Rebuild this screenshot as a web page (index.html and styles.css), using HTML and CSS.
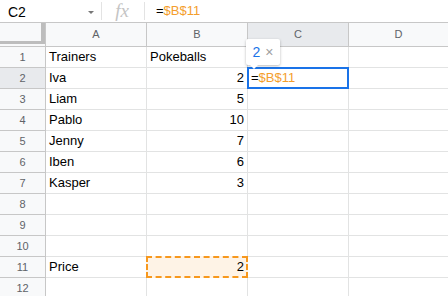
FILE: index.html
```html
<!DOCTYPE html>
<html>
<head>
<meta charset="utf-8">
<link rel="stylesheet" href="styles.css">
</head>
<body>
<div class="fbar">
  <div class="namebox"><span class="name">C2</span><span class="caret"></span></div>
  <div class="fx">fx</div>
  <div class="ftext">=<span class="ref">$B$11</span></div>
</div>
<div class="sheet">
  <div class="h corner"></div>
  <div class="h">A</div>
  <div class="h">B</div>
  <div class="h sel">C</div>
  <div class="h">D</div>

  <div class="rh">1</div><div class="c">Trainers</div><div class="c">Pokeballs</div><div class="c"></div><div class="c"></div>
  <div class="rh sel">2</div><div class="c">Iva</div><div class="c n">2</div><div class="c active">=<span class="ref">$B$11</span><div class="tip"><span class="tv">2</span><span class="tx">×</span></div></div><div class="c"></div>
  <div class="rh">3</div><div class="c">Liam</div><div class="c n">5</div><div class="c"></div><div class="c"></div>
  <div class="rh">4</div><div class="c">Pablo</div><div class="c n">10</div><div class="c"></div><div class="c"></div>
  <div class="rh">5</div><div class="c">Jenny</div><div class="c n">7</div><div class="c"></div><div class="c"></div>
  <div class="rh">6</div><div class="c">Iben</div><div class="c n">6</div><div class="c"></div><div class="c"></div>
  <div class="rh">7</div><div class="c">Kasper</div><div class="c n">3</div><div class="c"></div><div class="c"></div>
  <div class="rh">8</div><div class="c"></div><div class="c"></div><div class="c"></div><div class="c"></div>
  <div class="rh">9</div><div class="c"></div><div class="c"></div><div class="c"></div><div class="c"></div>
  <div class="rh">10</div><div class="c"></div><div class="c"></div><div class="c"></div><div class="c"></div>
  <div class="rh">11</div><div class="c">Price</div><div class="c n refcell"><span class="val">2</span></div><div class="c"></div><div class="c"></div>
  <div class="rh">12</div><div class="c"></div><div class="c"></div><div class="c"></div><div class="c"></div>
</div>
</body>
</html>
```
FILE: styles.css
```css
html, body {
  margin: 0;
  padding: 0;
  background: #fff;
  overflow: hidden;
}
body {
  width: 448px;
  height: 296px;
  font-family: "Liberation Sans", Arial, sans-serif;
  font-size: 13px;
  color: #000;
}
.fbar {
  display: flex;
  height: 22px;
  border-bottom: 1px solid #c7c7c7;
  box-sizing: content-box;
}
.namebox {
  width: 102px;
  display: flex;
  align-items: center;
  justify-content: space-between;
  padding: 0 7px 0 8px;
  box-sizing: border-box;
  border-right: 1px solid #e3e3e3;
  margin: 2px 0;
}
.name {
  font-size: 14px;
  color: #000;
  padding-top: 1px;
}
.caret {
  width: 0;
  height: 0;
  border-left: 3.5px solid transparent;
  border-right: 3.5px solid transparent;
  border-top: 3.5px solid #777;
  margin-top: 2px;
}
.fx {
  width: 43px;
  box-sizing: border-box;
  border-right: 1px solid #e3e3e3;
  margin: 2px 0;
  text-align: center;
  font-family: "Liberation Serif", "Times New Roman", serif;
  font-style: italic;
  font-size: 19px;
  line-height: 18px;
  color: #c4c4c4;
  padding-right: 2px;
}
.ftext {
  padding-left: 11px;
  line-height: 22px;
  font-size: 13px;
}
.ref {
  color: #f49e2c;
}
.sheet {
  display: grid;
  grid-template-columns: 46px 101px 101px 101px 100px;
  grid-template-rows: 24px;
  grid-auto-rows: 21px;
}
.h {
  background: #f8f9fa;
  border-right: 1px solid #c7c7c7;
  border-bottom: 1px solid #c7c7c7;
  box-sizing: border-box;
  text-align: center;
  font-size: 11px;
  line-height: 23px;
  color: #5f6368;
}
.h.sel, .rh.sel {
  background: #e8eaed;
}
.corner {
  position: relative;
  border-right: 1px solid #c7c7c7;
}
.corner::after {
  content: "";
  position: absolute;
  left: 0;
  top: 0;
  width: 41px;
  height: 18px;
  border-right: 4px solid #bdbdbd;
  border-bottom: 3px solid #bdbdbd;
}
.rh {
  background: #f8f9fa;
  border-right: 1px solid #c7c7c7;
  border-bottom: 1px solid #c7c7c7;
  box-sizing: border-box;
  text-align: center;
  font-size: 11px;
  line-height: 20px;
  color: #5f6368;
}
.c {
  position: relative;
  border-right: 1px solid #e2e3e3;
  border-bottom: 1px solid #e2e3e3;
  box-sizing: border-box;
  padding: 0 3px;
  line-height: 20px;
  white-space: nowrap;
}
.n {
  text-align: right;
}
.active {
  padding-left: 3px;
  z-index: 3;
}
.active::after {
  content: "";
  position: absolute;
  left: -1px;
  top: -1px;
  right: -1px;
  bottom: -1px;
  border: 2px solid #1a73e8;
  pointer-events: none;
}
.tip {
  position: absolute;
  left: -2px;
  top: -29px;
  width: 34px;
  height: 26px;
  background: #fff;
  border-radius: 2px;
  box-shadow: 0 1px 3px rgba(0,0,0,0.28);
  display: flex;
  align-items: center;
  justify-content: center;
  gap: 5px;
  z-index: 5;
}
.tip::after {
  content: "";
  position: absolute;
  left: 4px;
  bottom: -4px;
  width: 0;
  height: 0;
  border-left: 4px solid transparent;
  border-right: 4px solid transparent;
  border-top: 4px solid #fff;
}
.tv {
  color: #1a73e8;
  font-size: 14px;
}
.tx {
  color: #a0a0a0;
  font-size: 14px;
}
.refcell::before {
  content: "";
  position: absolute;
  left: -1px;
  top: -1px;
  right: -1px;
  bottom: -1px;
  background: #fef3e6;
  border: 2px dashed #f7981d;
}
.refcell .val {
  position: relative;
}
```
